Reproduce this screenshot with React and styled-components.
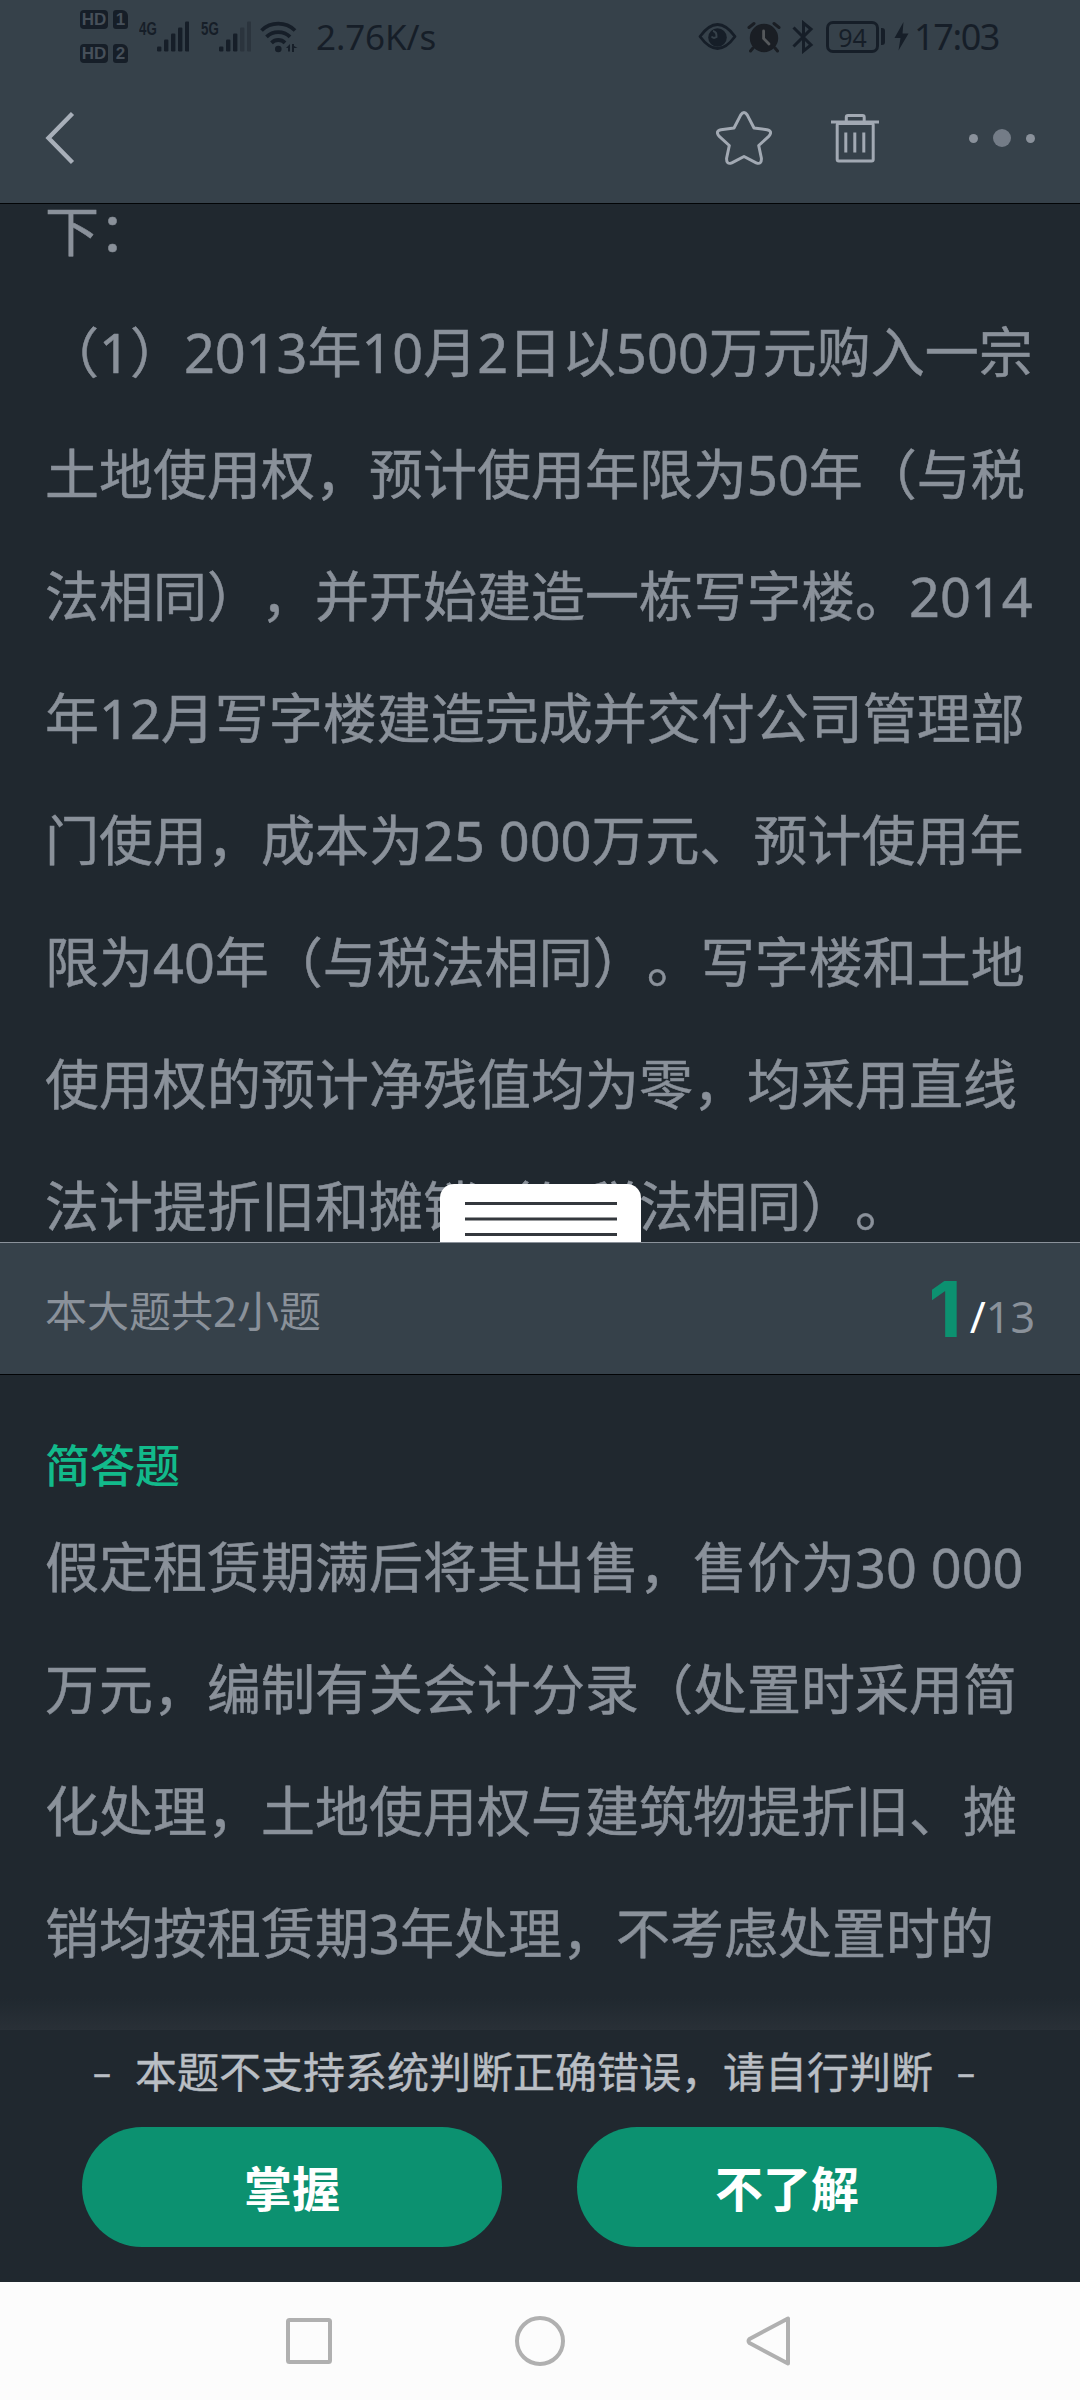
import React from "react";
import styled, { createGlobalStyle } from "styled-components";

const passageLines = [
  "下：",
  "（1）2013年10月2日以500万元购入一宗",
  "土地使用权，预计使用年限为50年（与税",
  "法相同），并开始建造一栋写字楼。2014",
  "年12月写字楼建造完成并交付公司管理部",
  "门使用，成本为25 000万元、预计使用年",
  "限为40年（与税法相同）。写字楼和土地",
  "使用权的预计净残值均为零，均采用直线",
  "法计提折旧和摊销（与税法相同）。"
];

const questionLines = [
  "假定租赁期满后将其出售，售价为30 000",
  "万元，编制有关会计分录（处置时采用简",
  "化处理，土地使用权与建筑物提折旧、摊",
  "销均按租赁期3年处理，不考虑处置时的"
];

const barHeights = [5, 12, 18, 24, 30];

const Signal = ({ label, active }) => (
  <SignalGroup>
    <NetLabel>{label}</NetLabel>
    <svg width="32" height="31" viewBox="0 0 32 31">
      {barHeights.map((h, i) => (
        <rect
          key={h}
          x={i * 7}
          y={30.5 - h}
          width="4.4"
          height={h}
          rx="1.2"
          fill={i < active ? "#161e28" : "#2b343d"}
        />
      ))}
    </svg>
  </SignalGroup>
);

const WifiIcon = () => (
  <svg width="38" height="32" viewBox="0 0 38 32" fill="none" stroke="#161e28" strokeWidth="3.8">
    <path d="M1.5 9.5 A24 24 0 0 1 35 9.5" />
    <path d="M6.5 15.8 A17 17 0 0 1 30 15.8" />
    <path d="M11.5 21.8 A9.5 9.5 0 0 1 25 21.8" />
    <circle cx="18.3" cy="28" r="3.3" fill="#161e28" stroke="none" />
    <path
      d="M26 27 L30 23 V30.5 H28 V27 Z M32 31 V23 H34 V25 L37.5 27 H34 V31 Z"
      fill="#161e28"
      stroke="none"
    />
  </svg>
);

const EyeIcon = () => (
  <svg width="39" height="27" viewBox="0 0 39 27">
    <path
      d="M2 13.5 Q19.5 -10.5 37 13.5 Q19.5 37.5 2 13.5 Z"
      fill="none"
      stroke="#161e28"
      strokeWidth="2.8"
      strokeLinejoin="round"
    />
    <circle cx="19.5" cy="14.5" r="9.3" fill="#161e28" />
    <path d="M15 8 Q19 9 18.5 14 Q15.5 16 13.5 13.5" fill="none" stroke="#36414a" strokeWidth="2" />
  </svg>
);

const AlarmIcon = () => (
  <svg width="34" height="32" viewBox="0 0 34 32" fill="none" stroke="#1a1e24" strokeWidth="3" strokeLinecap="round">
    <circle cx="17" cy="17" r="14.2" fill="#1a1e24" stroke="none" />
    <path d="M2 6.5 L7 2.5 M32 6.5 L27 2.5 M6 27 L3.5 30 M28 27 L30.5 30" />
    <path d="M16.6 10 V17.5 L22 23" stroke="#55585b" strokeWidth="2.8" />
  </svg>
);

const BluetoothIcon = () => (
  <svg width="22" height="34" viewBox="0 0 22 34" fill="none" stroke="#161e28" strokeWidth="3">
    <path d="M1.5 7.5 L19 25 L11.5 31 V3 L19 9 L1.5 26.5" />
  </svg>
);

const BoltIcon = () => (
  <svg width="15" height="29" viewBox="0 0 15 29">
    <path d="M9.5 0 L0.5 16 H6.5 L4.5 28.5 L14.5 11.5 H8.5 Z" fill="#161e28" />
  </svg>
);

const BackIcon = () => (
  <svg width="30" height="54" viewBox="0 0 30 54">
    <path d="M27.5 2.5 L3.5 27 L27.5 51.5" fill="none" stroke="#a8afb9" strokeWidth="4.4" />
  </svg>
);

const StarIcon = () => (
  <svg width="56" height="56" viewBox="0 0 56 56">
    <path
      d="M24.8 4.9 Q28 -0.1 31.2 4.9 L38 18 L51 19.7 Q57 21.1 53 26.1 L42.7 35.5 L45.4 48.3 Q45.7 54.9 40.2 52.9 L28 46.5 L15.8 52.9 Q10.3 54.9 10.6 48.3 L13.3 35.5 L3 26.1 Q-1 21.1 5 19.7 L18 18 Z"
      fill="none"
      stroke="#a2a9b3"
      strokeWidth="3"
      strokeLinejoin="round"
    />
  </svg>
);

const TrashIcon = () => (
  <svg width="48" height="50" viewBox="0 0 48 50" fill="none" stroke="#a2a9b3" strokeWidth="3">
    <path d="M0 9 H48" />
    <path d="M15.3 9 V4.3 Q15.3 2.6 17 2.6 H31.5 Q33.2 2.6 33.2 4.3 V9" />
    <rect x="6.2" y="10.5" width="36" height="37.5" rx="1.5" />
    <path d="M14.8 19.5 V39.5 M23.8 19.5 V39.5 M32.8 19.5 V39.5" />
  </svg>
);

const HandleIcon = () => (
  <svg width="152" height="36" viewBox="0 0 152 36" stroke="#34383d" strokeWidth="3.2">
    <path d="M0 2.5 H152 M0 18 H152 M0 33.5 H152" />
  </svg>
);

const App = () => (
  <Screen>
    <GlobalStyle />
    <StatusBar>
      <HdColumn>
        <HdRow>
          <HdBadge>HD</HdBadge>
          <SimBadge>1</SimBadge>
        </HdRow>
        <HdRow>
          <HdBadge>HD</HdBadge>
          <SimBadge>2</SimBadge>
        </HdRow>
      </HdColumn>
      <Signal label="4G" active={5} />
      <Signal label="5G" active={3} />
      <WifiIcon />
      <Speed>2.76K/s</Speed>
      <StatusRight>
        <EyeIcon />
        <AlarmIcon />
        <BluetoothIcon />
        <Battery>94</Battery>
        <BatteryTip />
        <BoltIcon />
        <Clock>17:03</Clock>
      </StatusRight>
    </StatusBar>

    <Header>
      <BackIcon />
      <HeaderActions>
        <StarIcon />
        <TrashIcon />
        <MoreDots>
          <Dot $size={9} />
          <Dot $size={18} $dim />
          <Dot $size={9} />
        </MoreDots>
      </HeaderActions>
    </Header>

    <Passage>
      {passageLines.map(line => (
        <Line key={line}>{line}</Line>
      ))}
      <DragHandle>
        <HandleIcon />
      </DragHandle>
    </Passage>

    <InfoBar>
      <InfoText>本大题共2小题</InfoText>
      <Counter>
        <Current>1</Current>
        <Slash>/</Slash>
        <Total>13</Total>
      </Counter>
    </InfoBar>

    <Question>
      <QuestionType>简答题</QuestionType>
      {questionLines.map(line => (
        <Line key={line}>{line}</Line>
      ))}
      <Fade />
    </Question>

    <Footer>
      <Hint>
        <Dash>–</Dash>
        本题不支持系统判断正确错误，请自行判断
        <Dash $end>–</Dash>
      </Hint>
      <ButtonRow>
        <Button>掌握</Button>
        <Button>不了解</Button>
      </ButtonRow>
    </Footer>

    <NavBar>
      <svg width="52" height="52" viewBox="0 0 52 52">
        <rect x="5" y="5" width="42" height="42" rx="1.5" />
      </svg>
      <svg width="52" height="52" viewBox="0 0 52 52">
        <circle cx="26" cy="26" r="23" />
      </svg>
      <svg width="52" height="52" viewBox="0 0 52 52">
        <path d="M43 3.5 V48.5 L4.5 28 Q2.5 26 4.5 24 Z" />
      </svg>
    </NavBar>
  </Screen>
);

export default App;

const GlobalStyle = createGlobalStyle`
  body {
    margin: 0;
    background: #20282f;
  }
  * {
    box-sizing: border-box;
  }
  svg {
    display: block;
    flex-shrink: 0;
  }
`;

const Screen = styled.div`
  display: flex;
  flex-direction: column;
  width: 1080px;
  height: 2400px;
  overflow: hidden;
  background: #20282f;
  color: #8a919a;
  font-family: "Noto Sans", "Noto Sans CJK SC", sans-serif;
  text-spacing-trim: space-all;
`;

const StatusBar = styled.div`
  display: flex;
  align-items: center;
  flex-shrink: 0;
  height: 73px;
  padding-left: 80px;
  background: #36414a;
  color: #161e28;
`;

const HdColumn = styled.div`
  display: flex;
  flex-direction: column;
  gap: 15px;
  width: 59px;
`;

const HdRow = styled.div`
  display: flex;
  gap: 5px;
`;

const HdBadge = styled.span`
  width: 28px;
  height: 19px;
  border-radius: 4px;
  background: #161e28;
  color: #47505a;
  font: bold 17px/19px "Liberation Sans", sans-serif;
  text-align: center;
`;

const SimBadge = styled(HdBadge)`
  width: 15px;
  border-radius: 3px 6px 3px 3px;
`;

const SignalGroup = styled.div`
  display: flex;
  align-items: flex-start;
  width: 62px;
  height: 31px;
  & + & {
    width: 59px;
  }
`;

const NetLabel = styled.span`
  width: 18px;
  font: bold 19px/15px "Liberation Sans", sans-serif;
  transform: scaleX(0.7);
  transform-origin: left top;
`;

const Speed = styled.span`
  margin-left: 18px;
  font-size: 35px;
  letter-spacing: -0.1px;
`;

const StatusRight = styled.div`
  display: flex;
  align-items: center;
  margin-left: auto;
  padding-right: 80px;
  svg:nth-child(2) {
    margin-left: 10px;
  }
  svg:nth-child(3) {
    margin-left: 11px;
  }
`;

const Battery = styled.span`
  width: 53px;
  height: 32px;
  margin-left: 12px;
  border: 3px solid #161e28;
  border-radius: 7px;
  font-size: 25px;
  line-height: 26px;
  text-align: center;
`;

const BatteryTip = styled.span`
  width: 4px;
  height: 17px;
  margin: 0 9px 0 2px;
  border-radius: 0 3px 3px 0;
  background: #161e28;
`;

const Clock = styled.span`
  width: 92px;
  margin-right: -1px;
  padding-left: 5px;
  font-size: 36px;
  letter-spacing: -1.4px;
  white-space: nowrap;
`;

const Header = styled.div`
  display: flex;
  align-items: center;
  justify-content: space-between;
  flex-shrink: 0;
  height: 131px;
  padding: 0 45px 0 45px;
  border-bottom: 1px solid #020406;
  background: #36414a;
`;

const HeaderActions = styled.div`
  display: flex;
  align-items: center;
  gap: 59px;
`;

const MoreDots = styled.div`
  display: flex;
  align-items: center;
  gap: 15px;
  margin-left: 31px;
`;

const Dot = styled.span`
  width: ${props => props.$size}px;
  height: ${props => props.$size}px;
  border-radius: 50%;
  background: ${props => (props.$dim ? "#747c87" : "#8a919b")};
`;

const Line = styled.p`
  margin: 0;
  height: 122px;
  font-size: 54px;
  line-height: 122px;
  white-space: nowrap;
  -webkit-text-stroke: 0.5px currentColor;
`;

const Passage = styled.div`
  position: relative;
  flex-shrink: 0;
  height: 1038px;
  padding: 0 45px;
  /* the first line sits right under the header */
  ${Line}:first-child {
    height: 87px;
    line-height: 54px;
  }
`;

const DragHandle = styled.div`
  position: absolute;
  left: 440px;
  bottom: 0;
  display: flex;
  justify-content: center;
  width: 201px;
  height: 58px;
  padding-top: 17px;
  border-radius: 14px 14px 0 0;
  background: #fff;
`;

const InfoBar = styled.div`
  display: flex;
  align-items: center;
  justify-content: space-between;
  flex-shrink: 0;
  height: 133px;
  padding: 0 45px;
  border-top: 1px solid #8b929b;
  border-bottom: 1px solid #020406;
  background: #36414a;
`;

const InfoText = styled.span`
  font-size: 42px;
`;

const Counter = styled.div`
  padding-top: 13px;
  font-size: 43px;
  line-height: 106px;
  white-space: nowrap;
`;

const Current = styled.span`
  margin-right: 8px;
  color: #0c9170;
  font-family: Inter, sans-serif;
  font-size: 77px;
  font-weight: 700;
`;

const Slash = styled.span`
  color: #fff;
  vertical-align: 4px;
`;

const Total = styled.span`
  vertical-align: 4px;
`;

const Question = styled.div`
  position: relative;
  flex-shrink: 0;
  height: 655px;
  padding: 61px 45px 0;
`;

const QuestionType = styled.div`
  height: 70px;
  color: #12ba8b;
  font-size: 45px;
  font-weight: 500;
  line-height: 60px;
`;

const Fade = styled.div`
  position: absolute;
  left: 0;
  right: 0;
  bottom: 0;
  height: 32px;
  background: linear-gradient(#20282f, #293037);
`;

const Footer = styled.div`
  flex-shrink: 0;
  height: 252px;
  padding: 0 83px 0 82px;
`;

const Hint = styled.div`
  display: flex;
  height: 97px;
  padding-left: 11px;
  color: #b9bec4;
  font-size: 42px;
  line-height: 84px;
  white-space: nowrap;
  -webkit-text-stroke: 0.4px currentColor;
`;

const Dash = styled.span`
  width: 42px;
  font-size: 36px;
  text-align: ${props => (props.$end ? "right" : "left")};
`;

const ButtonRow = styled.div`
  display: flex;
  justify-content: space-between;
`;

const Button = styled.button`
  width: 420px;
  height: 120px;
  padding: 0 0 2px;
  border: none;
  border-radius: 60px;
  background: #0c9170;
  color: #fff;
  font-family: inherit;
  font-size: 48px;
  font-weight: 700;
`;

const NavBar = styled.div`
  display: flex;
  align-items: center;
  justify-content: center;
  gap: 179px;
  flex-shrink: 0;
  height: 118px;
  background: #fcfcfc;
  svg {
    fill: none;
    stroke: #b0b0b0;
    stroke-width: 4;
    stroke-linejoin: round;
  }
`;
